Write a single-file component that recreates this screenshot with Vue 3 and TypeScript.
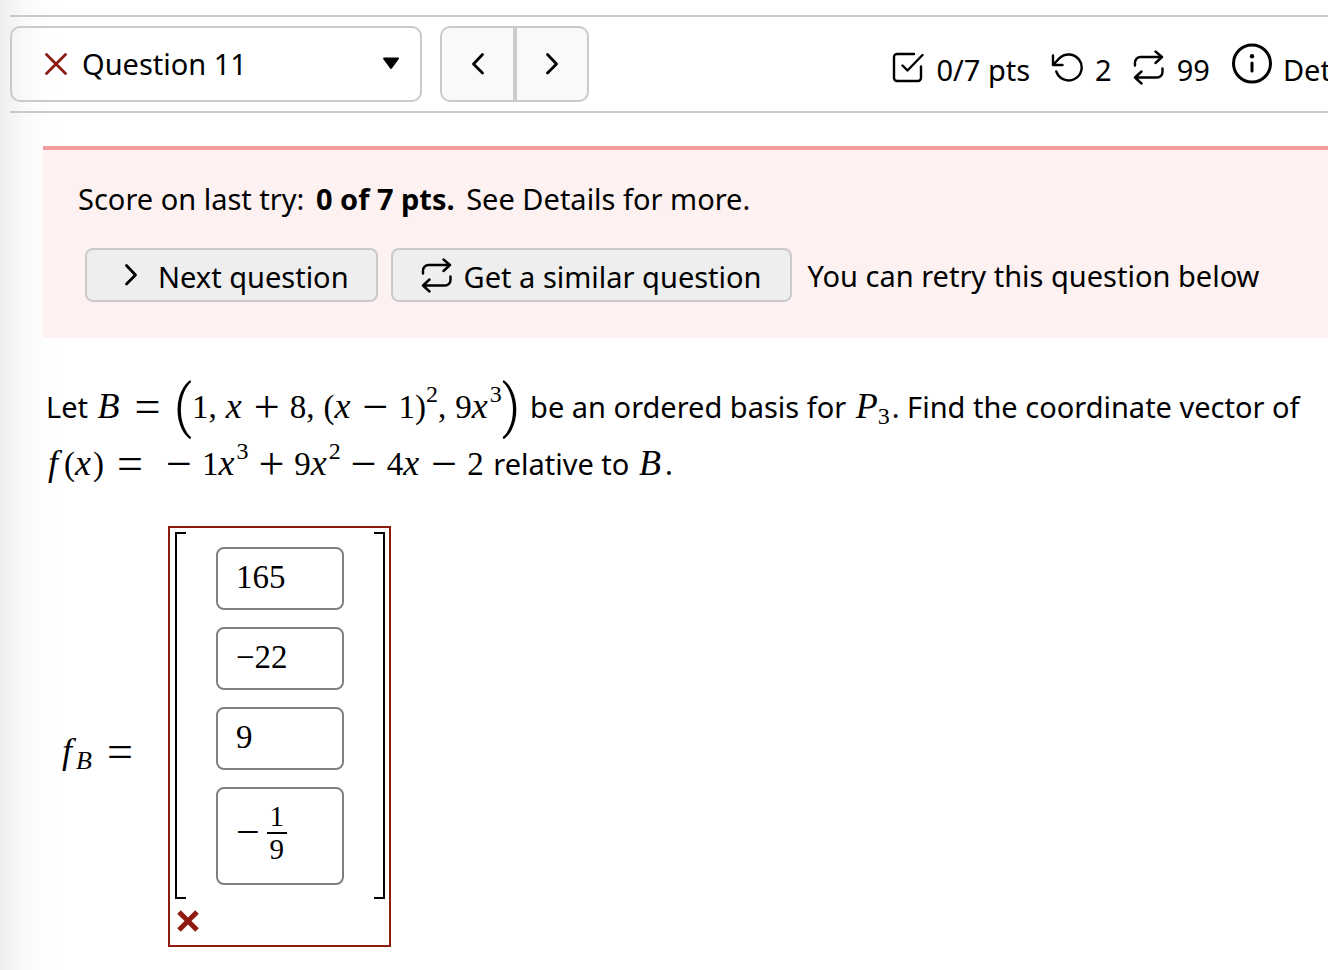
<script setup lang="ts">
import { ref } from 'vue'

interface Entry {
  id: number
  value: string
}

const question = ref('11')
const entries = ref<Entry[]>([
  { id: 1, value: '165' },
  { id: 2, value: '−22' },
  { id: 3, value: '9' },
])
const numerator = ref('1')
const denominator = ref('9')
</script>

<template>
  <main class="page">
    <header class="toolbar">
      <div class="picker">
        <svg class="picker-mark" width="22" height="22" viewBox="0 0 22 22" aria-hidden="true">
          <path d="M1.500 1.500 20.500 20.500M20.500 1.500 1.500 20.500" />
        </svg>
        <select v-model="question" aria-label="Question">
          <option value="11">Question 11</option>
        </select>
        <svg class="picker-arrow" width="18" height="14" viewBox="0 0 18 14" aria-hidden="true">
          <path d="M2 2.500H16L9 12Z" />
        </svg>
      </div>

      <nav class="pager" aria-label="Question navigation">
        <button type="button" aria-label="Previous question">
          <svg class="icon bold" width="14" height="24" viewBox="0 0 14 24"><path d="M11.500 2.500 2.500 12 11.500 21" /></svg>
        </button>
        <button type="button" aria-label="Next question">
          <svg class="icon bold" width="14" height="24" viewBox="0 0 14 24"><path d="M2.500 2.500 11.500 12 2.500 21" /></svg>
        </button>
      </nav>

      <div class="status">
        <span class="stat">
          <svg class="icon" width="32" height="36" viewBox="0 0 32 36" aria-hidden="true">
            <path d="M22 5H5a3 3 0 0 0-3 3V29a3 3 0 0 0 3 3H26a3 3 0 0 0 3-3V17.500M10.500 16.500 15.500 21.500 30.500 6" />
          </svg>
          <span>0/7 pts</span>
        </span>
        <span class="stat">
          <svg class="icon" width="32" height="36" viewBox="0 0 32 36" aria-hidden="true">
            <path d="M2 6.500V16H11.500M2 16 8.500 9.200A13 13 0 1 1 5.300 22.500" />
          </svg>
          <span>2</span>
        </span>
        <span class="stat">
          <svg class="icon" width="32" height="36" viewBox="0 0 32 36" aria-hidden="true">
            <path d="M2 16.500V13.500A5.500 5.500 0 0 1 7.500 8H29M22.500 2.500 29 8 22.500 14M29.500 19.500V23A5.500 5.500 0 0 1 24 28.500H2M8.500 22.500 2 28.500 8.500 34.500" />
          </svg>
          <span>99</span>
        </span>
        <a class="stat details" href="#details">
          <svg class="icon info" width="42" height="42" viewBox="0 0 42 42" aria-hidden="true">
            <circle cx="21" cy="20.500" r="18.500" />
            <path d="M21 20V28" />
            <circle class="dot" cx="21" cy="13.200" r="2.200" />
          </svg>
          <span>Details</span>
        </a>
      </div>
    </header>

    <section class="banner">
      <p>Score on last try: <strong>0 of 7 pts.</strong> See Details for more.</p>
      <div class="actions">
        <button type="button" class="next">
          <svg class="icon bold" width="14" height="24" viewBox="0 0 14 24" aria-hidden="true"><path d="M2.500 2.500 11.500 12 2.500 21" /></svg>
          <span>Next question</span>
        </button>
        <button type="button" class="similar">
          <svg class="icon" width="32" height="36" viewBox="0 0 32 36" aria-hidden="true">
            <path d="M2 16.500V13.500A5.500 5.500 0 0 1 7.500 8H29M22.500 2.500 29 8 22.500 14M29.500 19.500V23A5.500 5.500 0 0 1 24 28.500H2M8.500 22.500 2 28.500 8.500 34.500" />
          </svg>
          <span>Get a similar question</span>
        </button>
        <span class="note">You can retry this question below</span>
      </div>
    </section>

    <section class="problem">
      <p>
        Let
        <span class="math"><i>B</i><span class="op rel">=</span><span class="big">(</span>1<span class="comma">,</span><i>x</i><span class="op">+</span>8<span class="comma">,</span>(<i>x</i><span class="op">−</span>1)<sup>2</sup><span class="comma">,</span>9<i>x</i><sup>3</sup><span class="big">)</span></span>
        be an ordered basis for
        <span class="math"><i>P</i><sub>3</sub></span>. Find the coordinate vector of
        <span class="math"><i class="func">f</i>(<i>x</i>)<span class="op rel">=</span><span class="op">−</span>1<i>x</i><sup>3</sup><span class="op">+</span>9<i>x</i><sup>2</sup><span class="op">−</span>4<i>x</i><span class="op">−</span>2</span>
        relative to <span class="math"><i>B</i></span>.
      </p>
    </section>

    <section class="answer">
      <div class="math lhs"><i class="func">f</i><sub><i>B</i></sub><span class="op rel">=</span></div>
      <div class="graded">
        <div class="matrix">
          <input
            v-for="entry in entries"
            :key="entry.id"
            v-model="entry.value"
            class="cell"
            type="text"
            :aria-label="`Entry ${entry.id}`"
          />
          <div class="cell fraction-cell" role="group" aria-label="Entry 4">
            <span class="minus">−</span>
            <span class="fraction">
              <input v-model="numerator" type="text" aria-label="Numerator" />
              <input v-model="denominator" type="text" aria-label="Denominator" />
            </span>
          </div>
        </div>
        <svg class="wrong" width="22" height="22" viewBox="0 0 22 22" role="img" aria-label="Incorrect">
          <path d="M2 2 20 20M20 2 2 20" />
        </svg>
      </div>
    </section>
  </main>
</template>

<style>
html,
body {
  margin: 0;
  background: #fff;
}
</style>

<style scoped>
.page {
  box-sizing: border-box;
  min-height: 100vh;
  padding-top: 15px;
  overflow: hidden;
  color: #000;
  font-family: 'Noto Sans', 'Open Sans', sans-serif;
  font-size: 29px;
  line-height: 40px;
  background: linear-gradient(to right, #efefef 0, #f9f9f9 24px, #fefefe 48px, #fff 60px);
}

p {
  margin: 0;
}

button,
select,
input {
  box-sizing: border-box;
  margin: 0;
  color: inherit;
  font: inherit;
}

svg {
  display: block;
  flex: none;
}

.icon {
  fill: none;
  stroke: #000;
  stroke-width: 2.4;
  stroke-linecap: round;
  stroke-linejoin: round;
}

.icon.bold {
  stroke-width: 2.8;
}

.toolbar {
  display: flex;
  align-items: center;
  gap: 18px;
  margin-left: 10px;
  padding: 9px 0;
  border-top: 2px solid #cacaca;
  border-bottom: 2px solid #cacaca;
  white-space: nowrap;
}

.picker {
  position: relative;
  flex: 0 0 412px;
}

.picker select {
  display: block;
  width: 100%;
  height: 76px;
  padding: 0 60px 0 70px;
  border: 2px solid #cacaca;
  border-radius: 10px;
  background: transparent;
  appearance: none;
}

.picker-mark,
.picker-arrow {
  position: absolute;
  top: 27px;
  pointer-events: none;
}

.picker-mark {
  left: 35px;
  fill: none;
  stroke: #8f1a10;
  stroke-width: 2.8;
  stroke-linecap: round;
}

.picker-arrow {
  top: 30px;
  right: 22px;
  stroke: #000;
  stroke-width: 2;
  stroke-linejoin: round;
}

.pager {
  display: flex;
}

.pager button {
  display: flex;
  align-items: center;
  justify-content: center;
  width: 75px;
  height: 76px;
  padding: 0;
  border: 2px solid #cacaca;
  border-radius: 10px 0 0 10px;
  background: #f9f9f9;
}

.pager button + button {
  width: 74px;
  border-radius: 0 10px 10px 0;
}

.status {
  display: flex;
  align-items: center;
  gap: 21px;
  margin-right: -48px;
  margin-left: auto;
}

.stat {
  display: flex;
  align-items: center;
  gap: 12px;
  color: inherit;
  text-decoration: none;
}

.stat.details {
  gap: 10px;
}

.stat span {
  padding-top: 12px;
}

.stat svg {
  margin-top: 6px;
}

.stat .info {
  margin-top: 0;
  stroke-width: 3;
}

.info .dot {
  fill: #000;
  stroke: none;
}

.banner {
  margin: 33px 0 0 43px;
  padding: 29px 35px 36px;
  border-top: 4px solid #f29d9b;
  background: #fdf2f1;
}

.banner strong {
  margin: 0 4px;
}

.actions {
  display: flex;
  align-items: center;
  margin: 29px 0 0 7px;
  white-space: nowrap;
}

.actions button {
  display: flex;
  align-items: center;
  height: 54px;
  padding: 0 27px;
  border: 2px solid #cacaca;
  border-radius: 8px;
  background: #eee;
}

.actions button span {
  padding-top: 4px;
}

.actions .next {
  gap: 20px;
  padding-left: 37px;
}

.actions .similar {
  gap: 11px;
  margin-left: 13px;
  padding: 0 28px;
}

.note {
  padding-top: 2px;
  margin-left: 16px;
}

.problem {
  margin: 40px 0 0 46px;
}

.problem p {
  line-height: 57px;
}

.math {
  font-family: 'Liberation Serif', serif;
  font-size: 33px;
  line-height: 40px;
  white-space: nowrap;
}

.problem .math {
  margin: 0 2px;
}

.math i {
  margin-right: 2px;
  font-size: 36px;
}

.math .func {
  margin-right: 6px;
}

.math sup,
.math sub {
  font-size: 24px;
  line-height: 0;
}

.math sup {
  vertical-align: 16px;
}

.math sub {
  margin-left: -2px;
  vertical-align: -6px;
}

.math sub i {
  font-size: 26px;
}

.op {
  margin: 0 10px;
  font-size: 46px;
  line-height: 0;
  vertical-align: -4px;
}

.op.rel {
  margin: 0 13px;
}

.big {
  font-family: Roboto, sans-serif;
  font-size: 58px;
  font-weight: 300;
  line-height: 0;
  vertical-align: -8px;
}

.comma {
  margin-right: 9px;
}

.answer {
  display: flex;
  align-items: center;
  margin: 34px 0 0 62px;
}

.lhs {
  flex: 0 0 106px;
  padding-top: 30px;
}

.graded {
  padding: 4px 4px 13px 5px;
  border: 2px solid #8f1a10;
}

.matrix {
  display: grid;
  gap: 17px;
  padding: 15px 41px 14px;
  background:
    linear-gradient(#000, #000) left top / 11px 2px no-repeat,
    linear-gradient(#000, #000) left bottom / 11px 2px no-repeat,
    linear-gradient(#000, #000) right top / 11px 2px no-repeat,
    linear-gradient(#000, #000) right bottom / 11px 2px no-repeat,
    linear-gradient(#000, #000) left top / 2px 100% no-repeat,
    linear-gradient(#000, #000) right top / 2px 100% no-repeat;
}

.cell {
  box-sizing: border-box;
  width: 128px;
  height: 63px;
  padding: 0 18px 3px;
  border: 2px solid #808080;
  border-radius: 8px;
  background: #fff;
  font-family: 'Liberation Serif', serif;
  font-size: 33px;
}

.fraction-cell {
  display: flex;
  align-items: center;
  gap: 7px;
  height: 98px;
  padding-bottom: 8px;
}

.minus {
  font-size: 42px;
}

.fraction {
  display: grid;
}

.fraction input {
  width: 20px;
  height: 32px;
  padding: 0;
  border: 0;
  background: transparent;
  font-size: 29px;
  text-align: center;
}

.fraction input + input {
  border-top: 2px solid #000;
}

.wrong {
  margin: 11px 0 0 2px;
  fill: none;
  stroke: #8f1a10;
  stroke-width: 5;
}
</style>
